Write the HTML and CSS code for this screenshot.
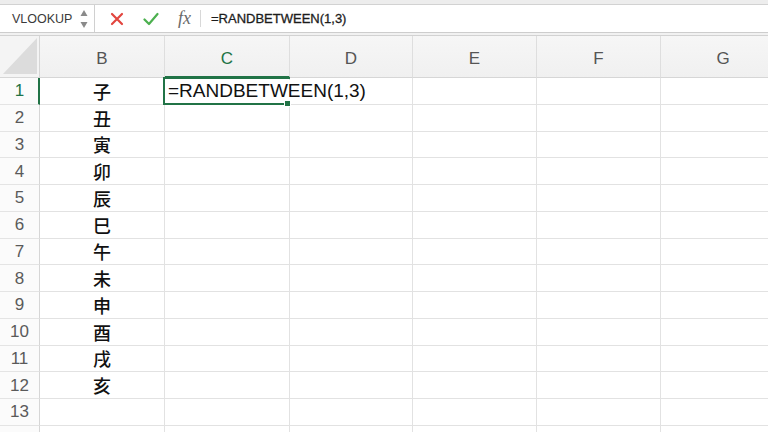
FILE: index.html
```html
<!DOCTYPE html>
<html>
<head>
<meta charset="utf-8">
<link rel="stylesheet" href="styles.css">
</head>
<body>
<div class="app">
  <div class="topstrip"></div>
  <div class="fbar">
    <div class="namebox">
      <span class="nbtext">VLOOKUP</span>
      <svg class="spin" width="8" height="20" viewBox="0 0 8 20"><path d="M4 1 L7.5 7 L0.5 7 Z" fill="#8a8a8a"/><path d="M4 19 L7.5 13 L0.5 13 Z" fill="#8a8a8a"/></svg>
    </div>
    <div class="fbtns">
      <svg class="ico" width="14" height="14" viewBox="0 0 14 14"><path d="M2 2 L12 12 M12 2 L2 12" stroke="#e2463f" stroke-width="2.2" stroke-linecap="round"/></svg>
      <svg class="ico" width="16" height="14" viewBox="0 0 16 14"><path d="M1.5 7.5 L6 12 L14.5 2" stroke="#4cb04f" stroke-width="2.2" fill="none" stroke-linecap="round" stroke-linejoin="round"/></svg>
      <span class="fx">fx</span>
    </div>
    <div class="fsep"></div>
    <div class="ftext">=RANDBETWEEN(1,3)</div>
  </div>
  <div class="gap"></div>
  <div class="sheet">
    <div class="corner"><svg width="34" height="36" viewBox="0 0 34 36"><path d="M0 36 L34 0 L34 36 Z" fill="#dcdcdc"/></svg></div>
    <div class="ch">B</div>
    <div class="ch sel">C</div>
    <div class="ch">D</div>
    <div class="ch">E</div>
    <div class="ch">F</div>
    <div class="ch last">G</div>

    <div class="rh sel">1</div><div class="c kj">子</div><div class="c"></div><div class="c"></div><div class="c"></div><div class="c"></div><div class="c last"></div>
    <div class="rh">2</div><div class="c kj">丑</div><div class="c"></div><div class="c"></div><div class="c"></div><div class="c"></div><div class="c last"></div>
    <div class="rh">3</div><div class="c kj">寅</div><div class="c"></div><div class="c"></div><div class="c"></div><div class="c"></div><div class="c last"></div>
    <div class="rh">4</div><div class="c kj">卯</div><div class="c"></div><div class="c"></div><div class="c"></div><div class="c"></div><div class="c last"></div>
    <div class="rh">5</div><div class="c kj">辰</div><div class="c"></div><div class="c"></div><div class="c"></div><div class="c"></div><div class="c last"></div>
    <div class="rh">6</div><div class="c kj">巳</div><div class="c"></div><div class="c"></div><div class="c"></div><div class="c"></div><div class="c last"></div>
    <div class="rh">7</div><div class="c kj">午</div><div class="c"></div><div class="c"></div><div class="c"></div><div class="c"></div><div class="c last"></div>
    <div class="rh">8</div><div class="c kj">未</div><div class="c"></div><div class="c"></div><div class="c"></div><div class="c"></div><div class="c last"></div>
    <div class="rh">9</div><div class="c kj">申</div><div class="c"></div><div class="c"></div><div class="c"></div><div class="c"></div><div class="c last"></div>
    <div class="rh">10</div><div class="c kj">酉</div><div class="c"></div><div class="c"></div><div class="c"></div><div class="c"></div><div class="c last"></div>
    <div class="rh">11</div><div class="c kj">戌</div><div class="c"></div><div class="c"></div><div class="c"></div><div class="c"></div><div class="c last"></div>
    <div class="rh">12</div><div class="c kj">亥</div><div class="c"></div><div class="c"></div><div class="c"></div><div class="c"></div><div class="c last"></div>
    <div class="rh">13</div><div class="c"></div><div class="c"></div><div class="c"></div><div class="c"></div><div class="c"></div><div class="c last"></div>
    <div class="rh"></div><div class="c"></div><div class="c"></div><div class="c"></div><div class="c"></div><div class="c"></div><div class="c last"></div>

    <div class="selbox">
      <span class="edit">=RANDBETWEEN(1,3)</span><span class="caret"></span>
      <span class="handle"></span>
    </div>
  </div>
</div>
</body>
</html>
```

FILE: styles.css
```css
html, body {
  margin: 0;
  padding: 0;
  background: #ffffff;
}
.app {
  width: 768px;
  height: 432px;
  overflow: hidden;
  font-family: "Liberation Sans", Arial, "Noto Sans CJK JP", sans-serif;
}
.topstrip {
  height: 4px;
  background: #ededed;
  border-bottom: 1px solid #d2d2d2;
}
.fbar {
  height: 27px;
  display: flex;
  align-items: center;
  background: #ffffff;
  border-bottom: 1px solid #cdcdcd;
}
.namebox {
  width: 95px;
  height: 27px;
  box-sizing: border-box;
  border-right: 1px solid #d0d0d0;
  display: flex;
  align-items: center;
  padding-left: 12px;
  padding-right: 4px;
}
.nbtext {
  font-size: 12.5px;
  color: #3a3a3a;
  flex: 1;
}
.spin {
  display: block;
  margin-right: 2px;
}
.fbtns {
  display: flex;
  align-items: center;
  padding-left: 15px;
  gap: 19px;
  width: 90px;
}
.ico {
  display: block;
}
.fx {
  font-family: "Liberation Serif", "Times New Roman", serif;
  font-style: italic;
  font-size: 18px;
  color: #6a6a6a;
}
.fsep {
  width: 1px;
  height: 17px;
  background: #d8d8d8;
}
.ftext {
  padding-left: 10px;
  font-size: 13px;
  color: #1c1c1c;
  -webkit-text-stroke: 0.3px #1c1c1c;
}
.gap {
  height: 2px;
  background: #f1f1f1;
  border-bottom: 1px solid #d2d2d2;
}
.sheet {
  position: relative;
  display: grid;
  grid-template-columns: 40px 125px 125px 123px 124px 124px 124px;
  grid-template-rows: 42px repeat(14, 26.75px);
}
.corner {
  background: #f4f4f4;
  border-right: 1px solid #d6d6d6;
  border-bottom: 1px solid #d6d6d6;
  display: flex;
  align-items: flex-end;
  justify-content: flex-end;
  padding: 0 2px 3px 0;
  box-sizing: border-box;
}
.corner svg {
  display: block;
}
.ch {
  background: linear-gradient(#f6f6f6, #f0f0f0);
  border-right: 1px solid #dedede;
  border-bottom: 1px solid #d6d6d6;
  box-sizing: border-box;
  display: flex;
  align-items: center;
  justify-content: center;
  font-size: 17px;
  color: #555555;
  padding-top: 5px;
}
.ch.sel {
  color: #217346;
  border-bottom: 2px solid #217346;
  padding-top: 6px;
}
.ch.last, .c.last {
  border-right: none;
}
.rh {
  background: #fbfbfb;
  border-right: 1px solid #d6d6d6;
  border-bottom: 1px solid #e4e4e4;
  box-sizing: border-box;
  display: flex;
  align-items: center;
  justify-content: center;
  font-size: 17px;
  color: #5a5a5a;
  padding-top: 1px;
}
.rh.sel {
  color: #217346;
  border-right: 2px solid #217346;
  padding-left: 1px;
}
.c {
  border-right: 1px solid #e2e2e2;
  border-bottom: 1px solid #e2e2e2;
  box-sizing: border-box;
}
.kj {
  display: flex;
  align-items: center;
  justify-content: center;
  font-family: "Noto Sans CJK JP", "Noto Sans CJK SC", sans-serif;
  font-size: 18px;
  font-weight: 500;
  color: #111111;
}
.selbox {
  position: absolute;
  left: 163px;
  top: 41px;
  width: 127px;
  height: 28px;
  box-sizing: border-box;
  border: 2px solid #217346;
  border-right: none;
  display: flex;
  align-items: center;
  white-space: nowrap;
}
.edit {
  font-size: 19px;
  color: #111111;
  padding-left: 3px;
  background: #ffffff;
}
.caret {
  display: inline-block;
  width: 1px;
  height: 19px;
  background: #333333;
  margin-left: 1px;
}
.handle {
  position: absolute;
  right: -1px;
  bottom: -4px;
  width: 5px;
  height: 5px;
  background: #217346;
  border: 1px solid #ffffff;
}
```
